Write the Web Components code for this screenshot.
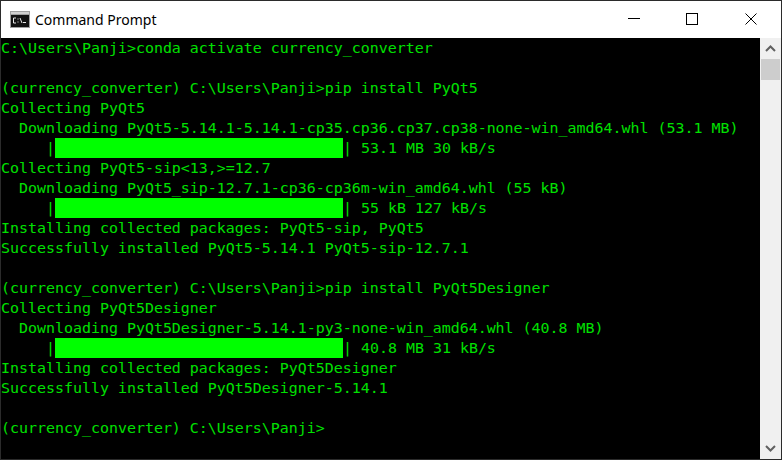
<!DOCTYPE html>
<html>
<head>
<meta charset="utf-8">
<title>Command Prompt</title>
<style>
  html, body { margin: 0; padding: 0; background: #000; }
</style>
</head>
<body>
<cmd-window title-text="Command Prompt">
  <cmd-line>C:\Users\Panji&gt;conda activate currency_converter</cmd-line>
  <cmd-line></cmd-line>
  <cmd-line>(currency_converter) C:\Users\Panji&gt;pip install PyQt5</cmd-line>
  <cmd-line>Collecting PyQt5</cmd-line>
  <cmd-line>  Downloading PyQt5-5.14.1-5.14.1-cp35.cp36.cp37.cp38-none-win_amd64.whl (53.1 MB)</cmd-line>
  <cmd-progress>53.1 MB 30 kB/s</cmd-progress>
  <cmd-line>Collecting PyQt5-sip&lt;13,&gt;=12.7</cmd-line>
  <cmd-line>  Downloading PyQt5_sip-12.7.1-cp36-cp36m-win_amd64.whl (55 kB)</cmd-line>
  <cmd-progress>55 kB 127 kB/s</cmd-progress>
  <cmd-line>Installing collected packages: PyQt5-sip, PyQt5</cmd-line>
  <cmd-line>Successfully installed PyQt5-5.14.1 PyQt5-sip-12.7.1</cmd-line>
  <cmd-line></cmd-line>
  <cmd-line>(currency_converter) C:\Users\Panji&gt;pip install PyQt5Designer</cmd-line>
  <cmd-line>Collecting PyQt5Designer</cmd-line>
  <cmd-line>  Downloading PyQt5Designer-5.14.1-py3-none-win_amd64.whl (40.8 MB)</cmd-line>
  <cmd-progress>40.8 MB 31 kB/s</cmd-progress>
  <cmd-line>Installing collected packages: PyQt5Designer</cmd-line>
  <cmd-line>Successfully installed PyQt5Designer-5.14.1</cmd-line>
  <cmd-line></cmd-line>
  <cmd-line>(currency_converter) C:\Users\Panji&gt;</cmd-line>
</cmd-window>

<script>
class CmdLine extends HTMLElement {
  constructor() {
    super();
    this.attachShadow( {mode: 'open'} ).innerHTML = `
      <style>
      :host {
        display: block;
        height: 20px;
        line-height: 20px;
      }
      div { white-space: pre; }
      </style>
      <div><slot></slot></div>
    `;
  }
}

class CmdProgress extends HTMLElement {
  constructor() {
    super();
    this.attachShadow( {mode: 'open'} ).innerHTML = `
      <style>
      :host {
        display: flex;
        height: 20px;
        line-height: 20px;
      }
      span { white-space: pre; }
      .fill {
        background: #00ff00;
        width: 288px;
      }
      </style>
      <span>     |</span><span class="fill"></span><span>| <slot></slot></span>
    `;
  }
}

class CmdScrollbar extends HTMLElement {
  constructor() {
    super();
    this.attachShadow( {mode: 'open'} ).innerHTML = `
      <style>
      :host {
        background: #f0f0f0;
        display: flex;
        flex-direction: column;
        flex: none;
        width: 21px;
      }
      .arrow {
        align-items: center;
        display: flex;
        flex: none;
        height: 21px;
        justify-content: center;
      }
      .thumb {
        background: #cdcdcd;
        flex: none;
        height: 21px;
        margin: 0 1px;
      }
      .track { flex-grow: 1; }
      svg { display: block; }
      </style>
      <div class="arrow">
        <svg width="11" height="7" viewBox="0 0 11 7"><path d="M1 6 L5.5 1.5 L10 6" fill="none" stroke="#606060" stroke-width="2"/></svg>
      </div>
      <div class="thumb"></div>
      <div class="track"></div>
      <div class="arrow">
        <svg width="11" height="7" viewBox="0 0 11 7"><path d="M1 1 L5.5 5.5 L10 1" fill="none" stroke="#606060" stroke-width="2"/></svg>
      </div>
    `;
  }
}

class CmdTitlebar extends HTMLElement {
  constructor() {
    super();
    this.attachShadow( {mode: 'open'} ).innerHTML = `
      <style>
      :host {
        align-items: center;
        background: #fff;
        box-sizing: border-box;
        color: #000;
        display: flex;
        flex: none;
        font-family: 'Noto Sans', 'Open Sans', sans-serif;
        font-size: 14px;
        height: 37px;
        padding: 0 1px 1px 0;
      }
      .icon { display: block; flex: none; margin: 1px 5px 0 9px; }
      .label { flex-grow: 1; }
      .btn {
        align-items: center;
        display: flex;
        flex: none;
        height: 36px;
        justify-content: center;
        width: 58px;
      }
      .close { margin-left: 1px; }
      </style>
      <svg class="icon" width="20" height="17" viewBox="0 0 20 17">
        <rect width="20" height="17" fill="#a0a0a0"/>
        <rect x="1" y="1" width="18" height="2" fill="#d0d0d0"/>
        <rect x="1" y="4" width="18" height="12" fill="#111"/>
        <path d="M6 7H3.5V12H6M8 7.5V8.5M8 10.5V11.5M10 7L12 12" fill="none" stroke="#e8e8e8" stroke-width="1"/>
        <rect x="13" y="11" width="3" height="1" fill="#e8e8e8"/>
      </svg>
      <span class="label"></span>
      <span class="btn"><svg width="12" height="12" viewBox="0 0 12 12"><rect y="5" width="12" height="1" fill="#000"/></svg></span>
      <span class="btn"><svg width="12" height="12" viewBox="0 0 12 12"><rect x=".5" y=".5" width="11" height="11" fill="none" stroke="#000"/></svg></span>
      <span class="btn close"><svg width="12" height="12" viewBox="0 0 12 12"><path d="M.5 .5L11.5 11.5M11.5 .5L.5 11.5" fill="none" stroke="#000"/></svg></span>
    `;
  }

  set label( value ) {
    this.shadowRoot.querySelector( '.label' ).textContent = value;
  }
}

class CmdWindow extends HTMLElement {
  constructor() {
    super();
    this.attachShadow( {mode: 'open'} ).innerHTML = `
      <style>
      :host {
        border: 1px solid #2b2b2b;
        box-sizing: border-box;
        display: flex;
        flex-direction: column;
        height: 460px;
        overflow: hidden;
        width: 782px;
      }
      .body {
        display: flex;
        flex-grow: 1;
        min-height: 0;
      }
      .console {
        background: #000;
        color: #00e000;
        flex-grow: 1;
        font-family: 'DejaVu Sans Mono', monospace;
        font-size: 14.94px;
        min-width: 0;
        overflow: hidden;
      }
      </style>
      <cmd-titlebar></cmd-titlebar>
      <div class="body">
        <div class="console"><slot></slot></div>
        <cmd-scrollbar></cmd-scrollbar>
      </div>
    `;
  }

  connectedCallback() {
    this.shadowRoot.querySelector( 'cmd-titlebar' ).label = this.getAttribute( 'title-text' );
  }
}

window.customElements.define( 'cmd-line', CmdLine );
window.customElements.define( 'cmd-progress', CmdProgress );
window.customElements.define( 'cmd-scrollbar', CmdScrollbar );
window.customElements.define( 'cmd-titlebar', CmdTitlebar );
window.customElements.define( 'cmd-window', CmdWindow );
</script>
</body>
</html>
